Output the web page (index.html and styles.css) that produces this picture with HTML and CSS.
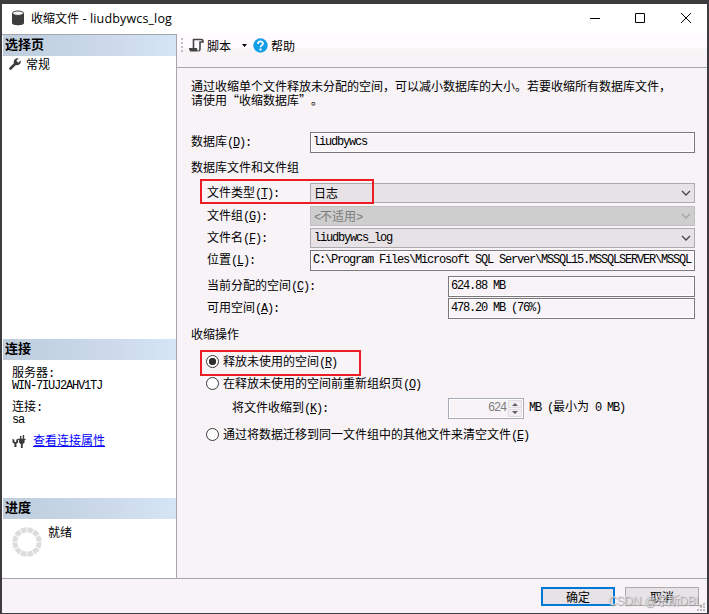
FILE: index.html
```html
<!DOCTYPE html>
<html lang="zh-CN">
<head>
<meta charset="utf-8">
<title>收缩文件 - liudbywcs_log</title>
<link rel="stylesheet" href="styles.css">
</head>
<body>
<div class="window">
  <header class="titlebar">
    <svg class="db-icon" width="14" height="16" viewBox="0 0 14 16"><path d="M1 3v10c0 3 12 3 12 0V3z" fill="#3d3d3d"/><ellipse cx="7" cy="3.2" rx="5.5" ry="2.2" fill="#f5f5f5" stroke="#3d3d3d"/></svg>
    <h1 class="title">收缩文件<span class="title-latin"> - liudbywcs_log</span></h1>
    <svg class="controls" width="102" height="12" viewBox="0 0 102 12" fill="none" stroke="#000"><path d="M0 6.5h10M45.500 1.500h9v9h-9z"/><path d="M91 1l10 10M101 1l-10 10"/></svg>
  </header>
  <div class="body">
    <aside class="sidebar">
      <section class="pages">
        <h2 class="head">选择页</h2>
        <div class="page-item">
          <svg width="12" height="12" viewBox="0 0 12 12"><path d="M1.500 10.500L7 5" stroke="#3b3b3b" stroke-width="2.600" stroke-linecap="round"/><path d="M9.500.5L7.300 2.700l2 2L11.500 2.500c1 2.300-.8 5-3.500 4.700C5 7 4 4 5.300 2 6.300.5 8 0 9.500.5z" fill="#3b3b3b"/></svg>
          <span>常规</span>
        </div>
      </section>
      <section class="connection">
        <h2 class="head">连接</h2>
        <div class="conn-info">
          <div>服务器<i>:</i></div><div><i>WIN-7IUJ2AHV1TJ</i></div>
          <div class="conn-user">连接<i>:</i></div><div><i>sa</i></div>
        </div>
        <div class="conn-link">
          <svg width="15" height="13" viewBox="0 0 15 14" fill="#3b3b3b"><path d="M0 4l2 1v2l1 .8L4 7V5l2-1v4L4.200 9.500V13H2V9.500L0 8zM6 4h8v1.500h-1V8l-2 2v4H9v-4L7 8V5.500H6zM8 1h1.500v3H8zM11 0h1.500v4H11z"/></svg>
          <a>查看连接属性</a>
        </div>
      </section>
      <section class="progress">
        <h2 class="head">进度</h2>
        <div class="status">
          <svg width="30" height="30" viewBox="0 0 30 30"><circle cx="15" cy="15" r="12.200" fill="none" stroke="#dddbdd" stroke-width="5" pathLength="120" stroke-dasharray="8.400 1.600" stroke-dashoffset="-.8"/></svg>
          <span>就绪</span>
        </div>
      </section>
    </aside>
    <main class="main">
      <div class="toolbar">
        <span class="grip"></span>
        <svg class="script-icon" width="15" height="14" viewBox="0 0 15 14"><path d="M4.500 10V1.500h8c1 0 1.500.7 1.500 2.500h-3v7c0 1.300-.7 1.800-1.500 1.800" fill="none" stroke="#444" stroke-width="1.600"/><path d="M0 10h8c0 1.500.3 2.300 1.500 3.500H2C.8 13.300 0 12 0 10z" fill="#444"/></svg>
        <span class="script">脚本</span>
        <svg class="drop" width="5" height="3" viewBox="0 0 5 3"><path d="M0 0h5L2.500 3z"/></svg>
        <svg width="15" height="15" viewBox="0 0 15 15"><circle cx="7.500" cy="7.500" r="7.200" fill="#149ee8"/><path d="M5 6c0-3.500 5-3.200 5-.4C10 7.500 7.500 7.300 7.500 9.300" fill="none" stroke="#fff" stroke-width="1.700"/><path d="M6.500 10.500h2v2h-2z" fill="#fff"/></svg>
        <span class="help">帮助</span>
      </div>
      <div class="form">
        <p class="desc">通过收缩单个文件释放未分配的空间，可以减小数据库的大小。若要收缩所有数据库文件，<br>请使用<span class="open">“</span>收缩数据库<span class="close">”</span>。</p>
        <div class="row database"><label>数据库<i>(<u>D</u>):</i></label><div class="field wide"><i>liudbywcs</i></div></div>
        <h3 class="group">数据库文件和文件组</h3>
        <div class="row type sub"><label>文件类型<i>(<u>T</u>):</i></label><div class="field wide combo"><span>日志</span><svg width="10" height="6" viewBox="0 0 10 6"><path d="M1 1l4 4 4-4"/></svg></div></div>
        <div class="row filegroup sub"><label>文件组<i>(<u>G</u>):</i></label><div class="field wide combo disabled"><span><i>&lt;</i>不适用<i>&gt;</i></span><svg width="10" height="6" viewBox="0 0 10 6"><path d="M1 1l4 4 4-4"/></svg></div></div>
        <div class="row filename sub"><label>文件名<i>(<u>F</u>):</i></label><div class="field wide combo"><i>liudbywcs_log</i><svg width="10" height="6" viewBox="0 0 10 6"><path d="M1 1l4 4 4-4"/></svg></div></div>
        <div class="row location sub"><label>位置<i>(<u>L</u>):</i></label><div class="field wide"><i>C:\Program Files\Microsoft SQL Server\MSSQL15.MSSQLSERVER\MSSQL</i></div></div>
        <div class="row allocated sub"><label>当前分配的空间<i>(<u>C</u>):</i></label><div class="field short"><i>624.88 MB</i></div></div>
        <div class="row available sub"><label>可用空间<i>(<u>A</u>):</i></label><div class="field short"><i>478.20 MB (76%)</i></div></div>
        <h3 class="group action">收缩操作</h3>
        <div class="option release"><span class="radio on"></span><span class="caption">释放未使用的空间<i>(<u>R</u>)</i></span></div>
        <div class="option reorganize"><span class="radio"></span><span class="caption">在释放未使用的空间前重新组织页<i>(<u>O</u>)</i></span></div>
        <div class="row target"><label>将文件收缩到<i>(<u>K</u>):</i></label><div class="spin"><i>624</i><svg width="14" height="17" viewBox="0 0 14 17"><path d="M.5.5h13v7H.5zM.5 9.500h13v7H.5z" fill="#f0eef0" stroke="#dedcdf"/><path d="M4 6h6L7 3zM4 11h6l-3 3z" fill="#606060"/></svg></div><span class="unit"><i>MB (</i>最小为<i> 0 MB)</i></span></div>
        <div class="option migrate"><span class="radio"></span><span class="caption">通过将数据迁移到同一文件组中的其他文件来清空文件<i>(<u>E</u>)</i></span></div>
      </div>
    </main>
  </div>
  <footer class="footer">
    <div class="button primary">确定</div>
    <div class="button">取消</div>
  </footer>
  <svg class="sizegrip" width="9" height="9" viewBox="0 0 9 9" fill="#bbb9bc"><path d="M6 0h2v2H6zM3 3h2v2H3zM6 3h2v2H6zM0 6h2v2H0zM3 6h2v2H3zM6 6h2v2H6z"/></svg>
</div>
<div class="mark mark-type"></div>
<div class="mark mark-release"></div>
<div class="watermark">CSDN @东斯DBL</div>
</body>
</html>
```
FILE: styles.css
```css
* { box-sizing: border-box; }
body {
  margin: 0;
  width: 709px;
  height: 614px;
  padding: 4px 2px 1px;
  overflow: hidden;
  background: #3c3c3e;
  color: #000;
  font: 12px/14px "Noto Sans CJK SC", sans-serif;
}
svg { display: block; flex: none; }
h1, h2, h3, p { margin: 0; font-size: 12px; font-weight: 400; }
i {
  font: 12px/12px "Liberation Mono", monospace;
  letter-spacing: -1.2px;
  white-space: pre;
}
u { text-underline-offset: 1px; }
.window {
  position: relative;
  display: flex;
  flex-direction: column;
  width: 705px;
  height: 609px;
  background: #f7f3f7;
}
.titlebar {
  display: flex;
  align-items: center;
  height: 30px;
  padding: 0 15px 2px 9px;
  background: #fff;
}
.title { margin-left: 6px; white-space: pre; }
.title-latin { font: 12.5px/14px "Open Sans", sans-serif; letter-spacing: .15px; }
.controls { margin-left: auto; }
.body { display: flex; height: 545px; border-bottom: 1px solid #a5a5b0; }
.sidebar {
  display: flex;
  flex-direction: column;
  width: 175px;
  padding-left: 1px;
  border-top: 1px solid #a5a5b0;
  border-right: 1px solid #a5a5b0;
  background: #fff;
}
.head {
  height: 21px;
  padding: 0 2px;
  background: linear-gradient(90deg, #bfcddc, #c4d4e5 35%, #ccd9ea 60%, #d5e5f6);
  font: 700 13px/17px "Noto Sans CJK SC", sans-serif;
}
.pages { height: 304px; }
.page-item { display: flex; align-items: center; height: 16px; padding-left: 6px; }
.page-item span { margin-left: 5px; }
.connection { height: 159px; }
.conn-info { padding: 6px 9px 0; line-height: 12px; }
.conn-info div { height: 12px; }
.conn-info .conn-user { margin-top: 10px; }
.conn-link { display: flex; align-items: center; height: 14px; margin: 9px 0 0 9px; }
.conn-link a { margin-left: 6px; color: #00f; text-decoration: underline; }
.conn-link svg { margin-top: 3px; }
.status { display: flex; padding: 6px 9px; }
.status span { margin-left: 6px; }
.status svg { margin-top: 2px; }
.main { flex: 1; min-width: 0; }
.toolbar {
  display: flex;
  align-items: center;
  height: 34px;
  padding: 0 4px 11px;
  border-bottom: 1px solid #a5a5b0;
  background: linear-gradient(#fffbff 14px, #f7f7f7 14px, #f7f3f7 20px);
}
.grip { width: 2px; height: 14px; background: repeating-linear-gradient(#c2bfc3 0 2px, transparent 2px 4px); }
.script-icon { margin-left: 6px; }
.script { margin: 0 11px 0 3px; padding-top: 1px; }
.drop { margin-right: 6px; }
.help { margin-left: 3px; padding-top: 1px; }
.form { padding: 11px 12px 0 14px; }
.desc { height: 28px; white-space: nowrap; }
.open, .close { display: inline-block; width: 12px; }
.open { text-align: right; }
.row { display: flex; align-items: center; height: 20px; }
.row label { width: 119px; padding-bottom: 2px; white-space: nowrap; }
.sub label { padding-left: 16px; }
.field {
  display: flex;
  align-items: center;
  height: 21px;
  padding: 0 1px 1px 2px;
  border: 1px solid #7a787b;
  box-shadow: inset 0 0 0 1px #fff;
  white-space: nowrap;
  overflow: hidden;
}
.wide { width: 385px; }
.short { width: 247px; margin-left: auto; }
.combo {
  justify-content: space-between;
  height: 20px;
  padding: 0 3px;
  border-color: #adabad;
  background: #e6e2e6;
  box-shadow: none;
}
.combo path { fill: none; stroke: #454545; stroke-width: 1.3; }
.disabled { border-color: #bfbfbf; background: #cecece; color: #7b7b7b; }
.disabled path { stroke: #a3a3a3; }
.database { height: 21px; margin-top: 25px; }
.group { height: 14px; margin-top: 7px; }
.type { margin-top: 9px; }
.filegroup { margin-top: 3px; }
.filename, .location { margin-top: 2px; }
.location, .allocated, .available { height: 21px; }
.allocated { margin-top: 5px; }
.available { margin-top: 1px; }
.allocated label, .available label { width: 140px; }
.action { margin-top: 8px; }
.option { display: flex; align-items: center; height: 14px; margin-left: 15px; white-space: nowrap; }
.radio { width: 13px; height: 13px; margin-right: 4px; border: 1px solid #3a3a3a; border-radius: 50%; background: #fff; }
.caption { padding-top: 1px; }
.on { background: radial-gradient(circle, #303030 3.4px, #fff 4px); }
.release { margin-top: 13px; }
.reorganize { margin-top: 8px; }
.target { height: 21px; margin-top: 8px; padding-left: 41px; }
.target label { width: 216px; }
.spin {
  display: flex;
  align-items: center;
  justify-content: flex-end;
  width: 76px;
  height: 21px;
  padding-right: 1px;
  border: 1px solid #a9abb8;
  box-shadow: inset 0 0 0 1px #fff;
  color: #7b7b7b;
}
.spin i { margin-right: 2px; padding-bottom: 2px; }
.unit { margin-left: 5px; padding-bottom: 4px; white-space: nowrap; }
.migrate { margin-top: 8px; }
.footer { display: flex; gap: 10px; justify-content: flex-end; padding: 8px 8px 0 0; }
.button {
  width: 74px;
  height: 19px;
  border: 1px solid #adabad;
  background: #e6e2e6;
  line-height: 18px;
  text-align: center;
}
.primary { border: 2px solid #0078d7; line-height: 16px; }
.sizegrip { position: absolute; right: 1px; bottom: 1px; }
.mark { position: absolute; border: 2px solid #ed1c24; }
.mark-type { left: 200px; top: 179px; width: 174px; height: 25px; }
.mark-release { left: 200px; top: 350px; width: 161px; height: 26px; }
.watermark {
  position: absolute;
  left: 608px;
  top: 593px;
  color: rgba(225, 223, 227, .75);
  font: 12px/16px "Liberation Sans", "Noto Sans CJK SC", sans-serif;
  letter-spacing: -.3px;
  text-shadow: 1px 1px 1px #999;
  white-space: nowrap;
}
```
